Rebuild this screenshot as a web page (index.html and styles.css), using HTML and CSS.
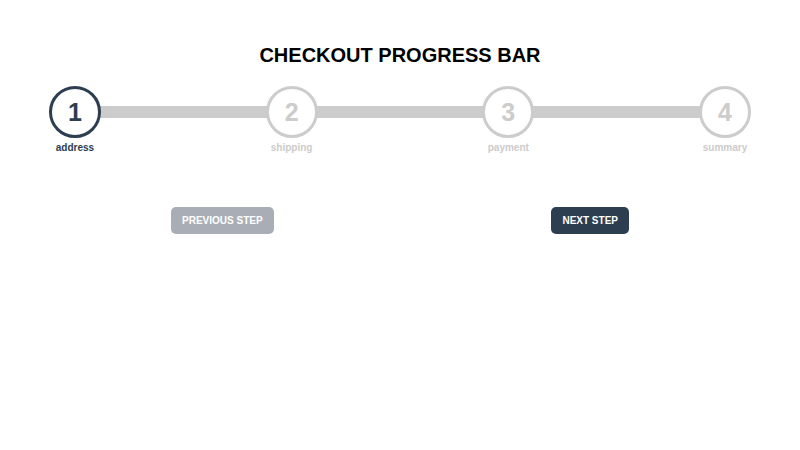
FILE: index.html
```html
<!DOCTYPE html>
<html>
<head>
<meta charset="utf-8">
<link rel="stylesheet" href="styles.css">
</head>
<body>
<h1 class="title">CHECKOUT PROGRESS BAR</h1>
<div class="progress">
  <div class="track"></div>
  <div class="step active"><div class="circle">1</div><div class="label">address</div></div>
  <div class="step"><div class="circle">2</div><div class="label">shipping</div></div>
  <div class="step"><div class="circle">3</div><div class="label">payment</div></div>
  <div class="step"><div class="circle">4</div><div class="label">summary</div></div>
</div>
<div class="buttons">
  <button class="btn btn-prev">PREVIOUS STEP</button>
  <button class="btn btn-next">NEXT STEP</button>
</div>
</body>
</html>
```
FILE: styles.css
```css
* { box-sizing: border-box; }
body {
  margin: 0;
  background: #fff;
  font-family: "Liberation Sans", Arial, sans-serif;
}
.title {
  margin: 44px 0 0;
  text-align: center;
  font-size: 20px;
  font-weight: bold;
  color: #000;
  line-height: 23px;
}
.progress {
  position: relative;
  width: 700px;
  margin: 19px auto 0;
  display: flex;
  justify-content: space-between;
}
.track {
  position: absolute;
  left: 25px;
  right: 25px;
  top: 20px;
  height: 12px;
  background: #cccccc;
}
.step {
  position: relative;
  width: 50px;
  display: flex;
  flex-direction: column;
  align-items: center;
}
.circle {
  width: 52px;
  height: 52px;
  margin: 0 -1px;
  border: 3px solid #cccccc;
  border-radius: 50%;
  background: #fff;
  color: #cccccc;
  font-size: 25px;
  font-weight: bold;
  display: flex;
  align-items: center;
  justify-content: center;
}
.label {
  margin-top: 4px;
  font-size: 10px;
  line-height: 12px;
  font-weight: bold;
  color: #cccccc;
  white-space: nowrap;
}
.step.active .circle {
  border-color: #2c3e50;
  color: #2c3e50;
}
.step.active .label { color: #2c3e50; }
.buttons {
  width: 458px;
  margin: 53px auto 0;
  display: flex;
  justify-content: space-between;
}
.btn {
  height: 27px;
  padding: 0 11px;
  border: none;
  border-radius: 5px;
  color: #fff;
  font-family: "Liberation Sans", Arial, sans-serif;
  font-size: 10px;
  font-weight: bold;
}
.btn-prev { background: #a9aeb6; }
.btn-next { background: #2c3e50; }
```
